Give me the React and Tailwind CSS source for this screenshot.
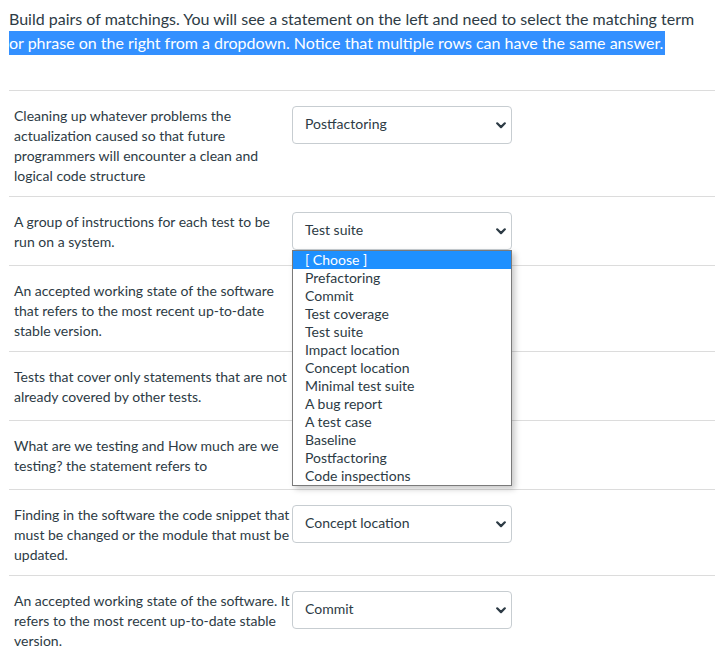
import React from "react";

const options = [
  "[ Choose ]",
  "Prefactoring",
  "Commit",
  "Test coverage",
  "Test suite",
  "Impact location",
  "Concept location",
  "Minimal test suite",
  "A bug report",
  "A test case",
  "Baseline",
  "Postfactoring",
  "Code inspections",
];

const rows = [
  {
    text: "Cleaning up whatever problems the actualization caused so that future programmers will encounter a clean and logical code structure",
    value: "Postfactoring",
  },
  { text: "A group of instructions for each test to be run on a system.", value: "Test suite", open: true },
  {
    text: "An accepted working state of the software that refers to the most recent up-to-date stable version.",
    value: "Baseline",
  },
  { text: "Tests that cover only statements that are not already covered by other tests.", value: "Minimal test suite" },
  { text: "What are we testing and How much are we testing? the statement refers to", value: "Test coverage" },
  {
    text: "Finding in the software the code snippet that must be changed or the module that must be updated.",
    value: "Concept location",
  },
  {
    text: "An accepted working state of the software. It refers to the most recent up-to-date stable version.",
    value: "Commit",
  },
];

function Chevron() {
  return (
    <svg width="10" height="7" viewBox="0 0 10 7" className="shrink-0">
      <path d="M1.2 1.3 L5 5.1 L8.8 1.3" fill="none" stroke="#2d3b45" strokeWidth="2.2" strokeLinecap="round" strokeLinejoin="round" />
    </svg>
  );
}

function Select({ value, open }) {
  return (
    <div className="relative my-[5px] w-[220px] shrink-0">
      <div className="h-[38px] border border-[#c7cdd1] rounded-[4px] bg-white flex items-center justify-between pl-[12px] pr-[5px] text-[14px]">
        <span className="pb-[3px]">{value}</span>
        <Chevron />
      </div>
      {open && (
        <div className="absolute left-0 top-full z-10 w-[220px] bg-white border border-[#7a7a7a] shadow-[3px_3px_6px_rgba(0,0,0,0.22)]">
          {options.map((o, i) => (
            <div
              key={o}
              className={
                i === 0
                  ? "h-[18px] leading-[17px] pl-[12px] text-[14px] bg-[#1e90ff] text-white"
                  : "h-[18px] leading-[17px] pl-[12px] text-[14px]"
              }
            >
              {o}
            </div>
          ))}
        </div>
      )}
    </div>
  );
}

export default function App() {
  return (
    <div className="w-[715px] h-[662px] overflow-hidden bg-white text-[#2d3b45] font-['Lato',_'Liberation_Sans',_sans-serif]">
      <p className="pl-[9px] pt-[7px] text-[16px] leading-[24px]">
        Build pairs of matchings. You will see a statement on the left and need to select the matching term
        <br />
        <span className="inline-block bg-[#3390ff] text-white pr-[2px]">
          or phrase on the right from a dropdown. Notice that multiple rows can have the same answer.
        </span>
      </p>

      <div className="ml-[9px] mt-[35px]">
        {rows.map((r, i) => (
          <div key={i} className="flex border-t border-[#dcdcdc] pl-[5px] py-[10px]">
            <div className="w-[278px] shrink-0 pt-[5px] text-[14px] leading-[20px]">{r.text}</div>
            <Select value={r.value} open={r.open} />
          </div>
        ))}
      </div>
    </div>
  );
}
